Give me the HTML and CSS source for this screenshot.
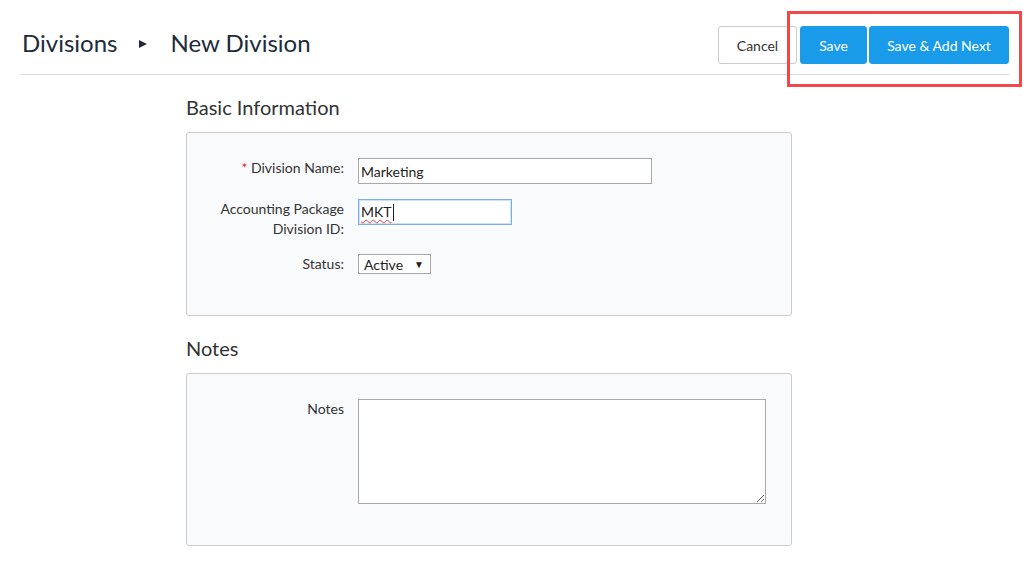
FILE: index.html
```html
<!DOCTYPE html>
<html>
<head>
<meta charset="utf-8">
<link rel="stylesheet" href="styles.css">
</head>
<body>
<div class="page">
  <header class="header">
    <h1 class="crumbs">
      <span>Divisions</span>
      <span class="sep"></span>
      <span>New Division</span>
    </h1>
    <div class="actions">
      <button class="btn btn-default">Cancel</button>
      <button class="btn btn-primary btn-save">Save</button>
      <button class="btn btn-primary btn-next">Save &amp; Add Next</button>
    </div>
  </header>
  <div class="highlight"></div>
  <main class="content">
    <h2 class="section-title first">Basic Information</h2>
    <div class="panel">
      <div class="row">
        <label class="label"><span class="req">*</span> Division Name:</label>
        <input class="input input-name" type="text" value="Marketing">
      </div>
      <div class="row">
        <label class="label">Accounting Package<br>Division ID:</label>
        <div class="input input-id"><span class="spell">MKT</span><span class="caret"></span></div>
      </div>
      <div class="row">
        <label class="label">Status:</label>
        <div class="select"><span>Active</span><span class="arrow">&#9660;</span></div>
      </div>
    </div>
    <h2 class="section-title">Notes</h2>
    <div class="panel">
      <div class="row">
        <label class="label">Notes</label>
        <textarea class="textarea"></textarea>
      </div>
    </div>
  </main>
</div>
</body>
</html>
```

FILE: styles.css
```css
* { box-sizing: border-box; }
html, body { margin: 0; padding: 0; background: #fff; }
body {
  font-family: Lato, "Open Sans", "Liberation Sans", sans-serif;
  color: #333;
  position: relative;
  width: 1035px;
  height: 571px;
  overflow: hidden;
}
.page { padding: 0 26px 0 21px; }
.header {
  display: flex;
  align-items: center;
  justify-content: space-between;
  padding: 26px 0 10px;
  border-bottom: 1px solid #d6dce4;
}
.crumbs {
  margin: 0;
  display: flex;
  align-items: center;
  font-size: 24px;
  font-weight: 400;
  color: #1d2b3b;
  line-height: 32px;
  padding: 0 0 4px 1px;
}
.sep {
  width: 0; height: 0;
  border-top: 4.5px solid transparent;
  border-bottom: 4.5px solid transparent;
  border-left: 8px solid #1d2b3b;
  margin: 2px 23px 0 22px;
}
.actions { display: flex; gap: 2px; }
.btn {
  height: 38px;
  font-family: inherit;
  font-size: 14px;
  border-radius: 3px;
  padding: 0;
  cursor: pointer;
}
.btn-default {
  width: 79px;
  background: #fff;
  border: 1px solid #ccc;
  color: #333;
  margin-right: 1px;
}
.btn-primary {
  background: #1a9be9;
  border: 1px solid #1a9be9;
  color: #fff;
}
.btn-save { width: 67px; }
.btn-next { width: 140px; }
.highlight {
  position: absolute;
  left: 787px;
  top: 11px;
  width: 235px;
  height: 76px;
  border: 3px solid #f4474a;
  pointer-events: none;
}
.content {
  width: 606px;
  margin-left: 165px;
}
.section-title {
  margin: 20px 0 13px;
  font-size: 20px;
  line-height: 24px;
  font-weight: 400;
  color: #333;
}
.section-title.first { margin-top: 20px; }
.panel {
  background: #f9fafc;
  border: 1px solid #ccc;
  border-radius: 3px;
  padding: 25px 0 41px;
  display: flex;
  flex-direction: column;
  gap: 15px;
}
.row { display: flex; align-items: flex-start; }
.label {
  width: 157px;
  flex: none;
  text-align: right;
  font-size: 14px;
  line-height: 20px;
  color: #333;
  margin-right: 14px;
}
.req { color: #e0242a; }
.input {
  height: 26px;
  border: 1px solid #a9a9a9;
  background: #fff;
  font-family: inherit;
  font-size: 14px;
  color: #222;
  padding: 0 2px;
  margin: 0;
}
.input-name { width: 294px; }
.input-id {
  width: 154px;
  border: 1px solid #7aaee6;
  box-shadow: 0 0 0 1px #cfe1f5 inset;
  display: flex;
  align-items: center;
  line-height: 20px;
}
.spell {
  text-decoration: underline wavy #e53935;
  text-decoration-thickness: 1px;
  text-underline-offset: 2px;
}
.caret {
  display: inline-block;
  width: 1px;
  height: 17px;
  background: #222;
  margin-left: 1px;
}
.select {
  width: 73px;
  height: 20px;
  border: 1px solid #a9a9a9;
  background: #fff;
  display: flex;
  align-items: center;
  justify-content: space-between;
  padding: 0 6px 0 5px;
  font-size: 14px;
  color: #222;
}
.arrow { font-size: 10px; color: #222; }
.textarea {
  width: 408px;
  height: 105px;
  border: 1px solid #a9a9a9;
  background: #fff;
  margin: 0;
  font-family: inherit;
  font-size: 14px;
}
```
